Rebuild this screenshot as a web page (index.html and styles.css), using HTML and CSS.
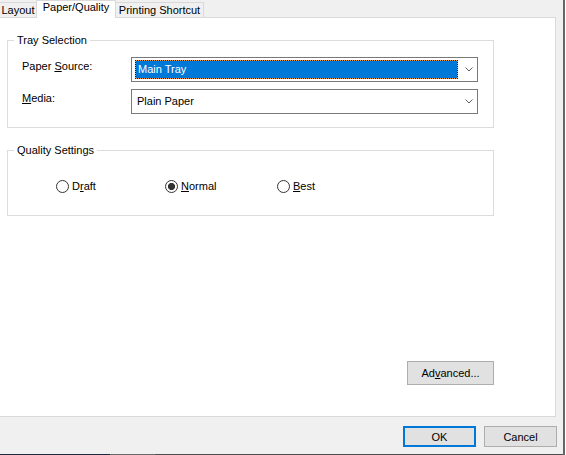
FILE: index.html
```html
<!DOCTYPE html>
<html lang="en">
<head>
<meta charset="utf-8">
<title>Printing Preferences</title>
<link rel="stylesheet" href="styles.css">
</head>
<body>
<div class="window">
  <div class="tabs">
    <div class="tab tab-first">Layout</div>
    <div class="tab tab-active">Paper/Quality</div>
    <div class="tab">Printing Shortcut</div>
  </div>

  <div class="page">
    <fieldset class="group">
      <legend>Tray Selection</legend>
      <div class="field-grid">
        <span class="field-label">Paper <u>S</u>ource:</span>
        <div class="combo">
          <span class="combo-value combo-value-focused">Main Tray</span>
          <svg class="chevron" width="8" height="5" viewBox="0 0 8 5"><path d="M0.5 0.5 L4 4 L7.5 0.5" fill="none" stroke="#5f5f5f" stroke-width="1"/></svg>
        </div>
        <span class="field-label"><u>M</u>edia:</span>
        <div class="combo">
          <span class="combo-value">Plain Paper</span>
          <svg class="chevron" width="8" height="5" viewBox="0 0 8 5"><path d="M0.5 0.5 L4 4 L7.5 0.5" fill="none" stroke="#5f5f5f" stroke-width="1"/></svg>
        </div>
      </div>
    </fieldset>

    <fieldset class="group group-quality">
      <legend>Quality Settings</legend>
      <div class="radio-row">
        <label class="radio"><span class="radio-dot"></span>D<u>r</u>aft</label>
        <label class="radio"><span class="radio-dot radio-dot-checked"></span><u>N</u>ormal</label>
        <label class="radio"><span class="radio-dot"></span><u>B</u>est</label>
      </div>
    </fieldset>

    <div class="page-actions">
      <button class="btn btn-advanced">Ad<u>v</u>anced...</button>
    </div>
  </div>

  <div class="footer">
    <button class="btn btn-dialog btn-default">OK</button>
    <button class="btn btn-dialog">Cancel</button>
  </div>
  <div class="frame-bottom"></div>
</div>
</body>
</html>
```

FILE: styles.css
```css
* {
  box-sizing: border-box;
}

html, body {
  margin: 0;
  padding: 0;
  background: #ffffff;
}

body {
  font-family: "Liberation Sans", Arial, sans-serif;
  font-size: 11px;
  line-height: 15px;
  color: #000000;
}

u {
  text-decoration-thickness: 1px;
  text-underline-offset: 1px;
}

/* dialog frame */
.window {
  width: 565px;
  height: 455px;
  background: #f0f0f0;
  border-right: 2px solid #666666;
  display: flex;
  flex-direction: column;
  overflow: hidden;
}

/* tab strip */
.tabs {
  height: 17px;
  display: flex;
  align-items: flex-end;
  position: relative;
  z-index: 1;
}

.tab {
  height: 15px;
  border: 1px solid #d9d9d9;
  border-bottom: none;
  background: #f0f0f0;
  text-align: center;
  line-height: 14px;
  white-space: nowrap;
  width: 89px;
  margin-left: -1px;
}

.tab-first {
  width: 38px;
}

.tab-active {
  width: 80px;
  height: 18px;
  margin-bottom: -1px;
  background: #ffffff;
  line-height: 12px;
  position: relative;
  z-index: 1;
}

/* tab page */
.page {
  margin-left: -1px;
  width: 557px;
  height: 400px;
  background: #ffffff;
  border: 1px solid #d9d9d9;
  display: flex;
  flex-direction: column;
  padding: 0 61px 31px 7px;
}

.group {
  margin: 15px 0 0 0;
  padding: 9px 15px 13px 0;
  border: 1px solid #dcdcdc;
  min-width: 0;
}

.group legend {
  margin-left: 6px;
  padding: 0 3px;
  line-height: 15px;
}

.field-grid {
  display: grid;
  grid-template-columns: 123px 1fr;
  row-gap: 7px;
}

.field-label {
  padding: 2px 0 0 14px;
  white-space: nowrap;
}

/* drop-down list */
.combo {
  height: 25px;
  border: 1px solid #7a7a7a;
  background: #ffffff;
  display: flex;
  align-items: center;
  padding: 2px 4px 2px 3px;
}

.combo-value {
  flex: 1;
  height: 19px;
  line-height: 17px;
  padding-left: 1px;
  border: 1px solid transparent;
  white-space: nowrap;
}

.combo-value-focused {
  padding-left: 2px;
  color: #ffffff;
  border: 1px dotted #1a1a1a;
  background: linear-gradient(#0078d7, #0078d7) padding-box,
              linear-gradient(#f6a13a, #f6a13a) border-box;
}

.chevron {
  display: block;
  margin-left: 7px;
}

/* radio group */
.group-quality {
  padding: 21px 0 21px 0;
}

.radio-row {
  display: grid;
  grid-template-columns: 109px 112px auto;
  padding-left: 48px;
}

.radio {
  display: flex;
  align-items: center;
  height: 15px;
  white-space: nowrap;
}

.radio-dot {
  width: 13px;
  height: 13px;
  border: 1px solid #333333;
  border-radius: 50%;
  background: #ffffff;
  margin-right: 3px;
  flex: none;
}

.radio-dot-checked {
  background: radial-gradient(circle, #333333 0, #333333 3.2px, #ffffff 3.9px);
}

/* buttons */
.page-actions {
  margin-top: auto;
  display: flex;
  justify-content: flex-end;
}

.btn {
  font-family: inherit;
  font-size: 11px;
  color: #000000;
  background: #e1e1e1;
  border: 1px solid #adadad;
  border-radius: 0;
  padding: 0;
  margin: 0;
  text-align: center;
}

.btn-advanced {
  width: 87px;
  height: 24px;
}

.footer {
  height: 37px;
  display: flex;
  justify-content: flex-end;
  align-items: flex-start;
  gap: 8px;
  padding: 9px 6px 0 0;
}

.btn-dialog {
  width: 73px;
  height: 21px;
}

.btn-default {
  border-color: #0078d7;
  box-shadow: inset 0 0 0 1px #0078d7;
}

.frame-bottom {
  height: 1px;
  background: linear-gradient(to right, #1d2842 0, #1d2842 110px, #6a6a6a 110px, #6a6a6a 155px, #4e4e4e 155px);
}
```
